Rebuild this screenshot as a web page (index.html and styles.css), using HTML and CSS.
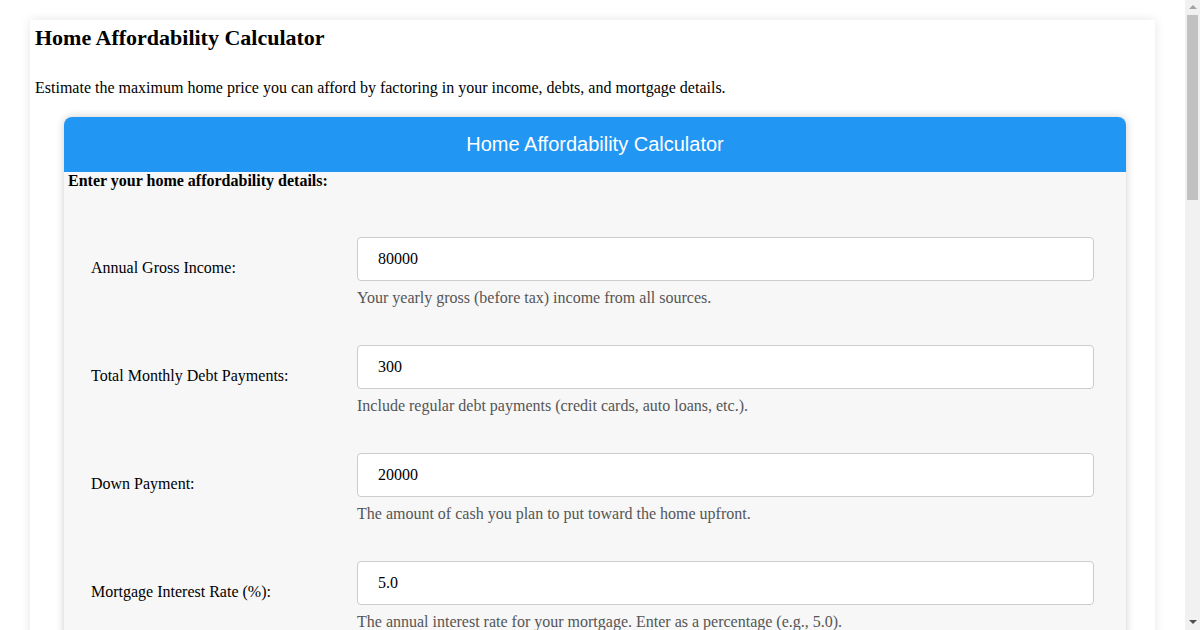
FILE: index.html
```html
<!DOCTYPE html>
<html lang="en">
<head>
    <meta charset="UTF-8">
    <meta name="viewport" content="width=device-width, initial-scale=1.0">
    <title>Home Affordability Calculator</title>
    <link rel="stylesheet" href="styles.css">
</head>
<body>
    <div class="page">
        <h2>Home Affordability Calculator</h2>
        <p class="intro">Estimate the maximum home price you can afford by factoring in your income, debts, and mortgage details.</p>

        <div class="calculator">
            <div class="calc-header">Home Affordability Calculator</div>
            <div class="calc-body">
                <p class="calc-title">Enter your home affordability details:</p>
                <form id="affordForm">
                    <div class="form-row">
                        <label for="income">Annual Gross Income:</label>
                        <div class="field">
                            <input type="text" id="income" value="80000">
                            <div class="hint">Your yearly gross (before tax) income from all sources.</div>
                        </div>
                    </div>
                    <div class="form-row">
                        <label for="debts">Total Monthly Debt Payments:</label>
                        <div class="field">
                            <input type="text" id="debts" value="300">
                            <div class="hint">Include regular debt payments (credit cards, auto loans, etc.).</div>
                        </div>
                    </div>
                    <div class="form-row">
                        <label for="down">Down Payment:</label>
                        <div class="field">
                            <input type="text" id="down" value="20000">
                            <div class="hint">The amount of cash you plan to put toward the home upfront.</div>
                        </div>
                    </div>
                    <div class="form-row">
                        <label for="rate">Mortgage Interest Rate (%):</label>
                        <div class="field">
                            <input type="text" id="rate" value="5.0">
                            <div class="hint">The annual interest rate for your mortgage. Enter as a percentage (e.g., 5.0).</div>
                        </div>
                    </div>
                    <div class="form-row">
                        <label for="term">Loan Term (years):</label>
                        <div class="field">
                            <input type="text" id="term" value="30">
                            <div class="hint">The length of the mortgage in years.</div>
                        </div>
                    </div>
                    <div class="form-row">
                        <label for="tax">Annual Property Tax:</label>
                        <div class="field">
                            <input type="text" id="tax" value="3000">
                            <div class="hint">Estimated yearly property tax for the home.</div>
                        </div>
                    </div>
                    <div class="form-actions">
                        <button type="submit">Calculate</button>
                    </div>
                </form>
                <div class="result" id="result"></div>
            </div>
        </div>
    </div>

    <!-- window scrollbar, drawn since the headless shot hides the real one -->
    <div class="scrollbar">
        <span class="arrow-up"></span>
        <span class="thumb"></span>
        <span class="arrow-down"></span>
    </div>
</body>
</html>
```

FILE: styles.css
```css
body {
    margin: 0 15px 0 0;
    padding: 0;
    background: #fff;
    font-family: "Liberation Serif", "Times New Roman", serif;
    font-size: 16px;
    color: #000;
}
.page {
    margin: 20px 30px;
    padding: 5px 5px 40px;
    background: #fff;
    box-shadow: 0 0 10px rgba(0, 0, 0, 0.1);
}
h2 {
    margin: 0 0 28px;
    font-size: 22px;
}
.intro {
    margin: 0 0 20px;
}
.calculator {
    margin: 0 24px 0 29px;
    background: #f7f7f7;
    border-radius: 8px;
    box-shadow: 0 0 8px rgba(0, 0, 0, 0.2);
    overflow: hidden;
}
.calc-header {
    background: #2196f3;
    color: #fff;
    text-align: center;
    font-family: "Liberation Sans", Arial, sans-serif;
    font-size: 20px;
    padding: 16px 0;
}
.calc-body {
    padding: 0 4px 30px;
}
.calc-title {
    margin: 0 0 28px;
    font-weight: bold;
}
.form-row {
    display: grid;
    grid-template-columns: 266px 737px;
    align-items: center;
    padding: 19px 0 19px 23px;
}
.form-row label {
    margin-bottom: 8px;
}
.field input {
    display: block;
    box-sizing: border-box;
    width: 100%;
    height: 44px;
    padding: 0 20px;
    font-family: inherit;
    font-size: 16px;
    color: #000;
    background: #fff;
    border: 1px solid #ccc;
    border-radius: 4px;
}
.hint {
    margin-top: 7px;
    line-height: 19px;
    color: #555;
}
.form-actions {
    padding: 19px 0 0 289px;
}
button {
    padding: 12px 30px;
    font-size: 16px;
    border: none;
    background: #2196f3;
    color: #fff;
    border-radius: 4px;
    cursor: pointer;
}
.result {
    margin-top: 20px;
}
.scrollbar {
    position: fixed;
    top: 0;
    right: 0;
    width: 15px;
    height: 100vh;
    background: #f1f1f1;
    display: flex;
    flex-direction: column;
    align-items: center;
}
.arrow-up {
    margin-top: 5px;
    border-left: 4px solid transparent;
    border-right: 4px solid transparent;
    border-bottom: 4px solid #a3a3a3;
}
.thumb {
    margin-top: 6px;
    width: 11px;
    height: 185px;
    background: #c1c1c1;
}
.arrow-down {
    margin-top: auto;
    margin-bottom: 6px;
    border-left: 4px solid transparent;
    border-right: 4px solid transparent;
    border-top: 4px solid #505050;
}
```
